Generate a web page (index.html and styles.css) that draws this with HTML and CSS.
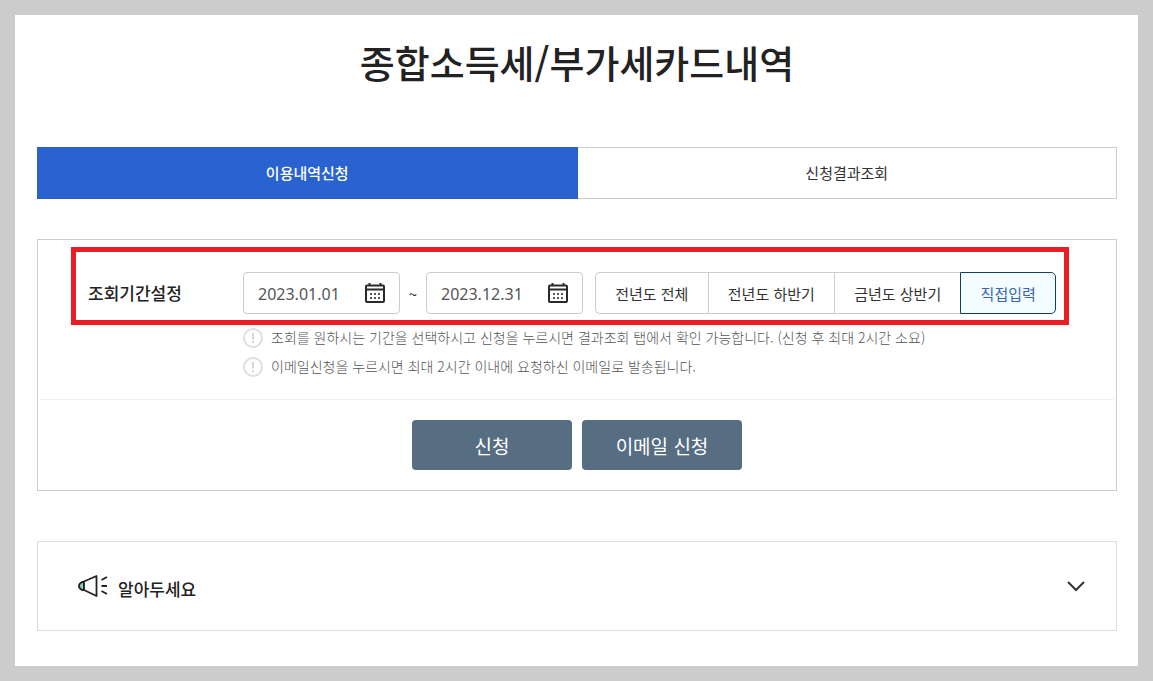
FILE: index.html
```html
<!DOCTYPE html>
<html lang="ko">
<head>
<meta charset="utf-8">
<meta name="viewport" content="width=device-width, initial-scale=1">
<title>종합소득세/부가세카드내역</title>
<link rel="stylesheet" href="styles.css">
</head>
<body>
<svg class="sprite" aria-hidden="true">
  <symbol id="calendar" viewBox="0 0 22 22">
    <path d="M3 3.500h16q1 0 1 1V19q0 1-1 1H3q-1 0-1-1V4.500q0-1 1-1z" fill="none" stroke="#2a2a2a" stroke-width="2"/>
    <path d="M2 7.500h18" stroke="#2a2a2a" stroke-width="2"/>
    <path d="M5.500 1v3M16.500 1v3" stroke="#2a2a2a" stroke-width="2"/>
    <path d="M6 11h2v2H6zm4 0h2v2h-2zm4 0h2v2h-2zM6 15h2v2H6zm4 0h2v2h-2zm4 0h2v2h-2z" fill="#555"/>
  </symbol>
  <symbol id="info" viewBox="0 0 20 20">
    <circle cx="10" cy="10" r="9" fill="none" stroke="#dfdfdf" stroke-width="2"/>
    <path d="M10 5v6.500M10 13v2" stroke="#d6d6d6" stroke-width="2"/>
  </symbol>
</svg>
<main class="page">
  <h1 class="title">종합소득세/부가세카드내역</h1>

  <nav class="tabs">
    <a class="tab tab-active" href="#apply" aria-current="page">이용내역신청</a>
    <a class="tab" href="#result">신청결과조회</a>
  </nav>

  <form class="panel" id="apply">
    <div class="fields">
      <div class="period">
        <label class="period-label" for="from">조회기간설정</label>
        <div class="controls">
          <div class="date">
            <input class="date-input" id="from" type="text" value="2023.01.01">
            <button class="date-button" type="button" aria-label="시작일 선택"><svg class="calendar"><use href="#calendar"/></svg></button>
          </div>
          <span class="tilde">~</span>
          <div class="date">
            <input class="date-input" type="text" value="2023.12.31" aria-label="종료일">
            <button class="date-button" type="button" aria-label="종료일 선택"><svg class="calendar"><use href="#calendar"/></svg></button>
          </div>
          <div class="segments">
            <button class="segment" type="button">전년도 전체</button>
            <button class="segment" type="button">전년도 하반기</button>
            <button class="segment" type="button">금년도 상반기</button>
            <button class="segment segment-active" type="button" aria-pressed="true">직접입력</button>
          </div>
        </div>
      </div>
      <ul class="notes">
        <li class="note"><svg class="info" aria-hidden="true"><use href="#info"/></svg><span class="note-text">조회를 원하시는 기간을 선택하시고 신청을 누르시면 결과조회 탭에서 확인 가능합니다. (신청 후 최대 2시간 소요)</span></li>
        <li class="note"><svg class="info" aria-hidden="true"><use href="#info"/></svg><span class="note-text">이메일신청을 누르시면 최대 2시간 이내에 요청하신 이메일로 발송됩니다.</span></li>
      </ul>
    </div>
    <div class="actions">
      <button class="action" type="submit">신청</button>
      <button class="action" type="button">이메일 신청</button>
    </div>
  </form>

  <button class="guide" type="button" aria-expanded="false">
    <svg class="megaphone" viewBox="0 0 30 24" aria-hidden="true">
      <path d="M6 8H4q-3 1.500-3 4t3 4h2z" fill="#7fd6b0" stroke="#222" stroke-width="1.800"/>
      <path d="M6 7.500 18.500 2v20L6 16z" fill="#fff" stroke="#222" stroke-width="1.800" stroke-linejoin="round"/>
      <path d="M23.500 6 29 3M23.500 12H29M23.500 17l5.500 3" fill="none" stroke="#222" stroke-width="1.800"/>
    </svg>
    <span class="guide-title">알아두세요</span>
    <svg class="chevron" viewBox="0 0 20 12" aria-hidden="true"><path d="m2 2 8 8 8-8" fill="none" stroke="#333" stroke-width="2"/></svg>
  </button>
</main>
</body>
</html>
```
FILE: styles.css
```css
* {
  box-sizing: border-box;
}

body {
  margin: 0;
  padding: 15px;
  background: #ccc;
  color: #222;
  font-family: "Noto Sans CJK KR", sans-serif;
  font-size: 15px;
}

button,
input {
  margin: 0;
  font: inherit;
  color: inherit;
}

.sprite {
  display: none;
}

.page {
  padding: 20px 21px 35px 22px;
  background: #fff;
}

.title {
  margin: 0 0 58px;
  font-size: 38px;
  font-weight: 500;
  line-height: 54px;
  text-align: center;
}

.tabs {
  display: flex;
  height: 52px;
}

.tab {
  flex: 1;
  display: flex;
  align-items: center;
  justify-content: center;
  padding-bottom: 2px;
  border: 1px solid #ccc;
  border-left: 0;
  color: #333;
  text-decoration: none;
}

.tab-active {
  border: 1px solid #2c62b8;
  background: #2a63d0;
  color: #fff;
  font-weight: 500;
}

.panel {
  margin-top: 40px;
  border: 1px solid #ccc;
}

.fields {
  margin: 0 2px;
  padding: 32px 58px 22px 48px;
  border-bottom: 1px solid #f0f0f0;
}

.period {
  position: relative;
  display: flex;
  align-items: center;
}

.period::after {
  content: "";
  position: absolute;
  inset: -25px -13px -11px -17px;
  border: 5px solid #ec1c24;
  pointer-events: none;
}

.period-label {
  width: 155px;
  flex: none;
  padding-bottom: 2px;
  font-size: 17px;
  font-weight: 500;
}

.controls {
  flex: 1;
  display: flex;
  align-items: center;
}

.date {
  display: flex;
  align-items: center;
  width: 157px;
  height: 42px;
  padding: 0 13px 0 14px;
  border: 1px solid #ccc;
  border-radius: 4px;
}

.date-input {
  flex: 1;
  min-width: 0;
  padding: 2px 0 0;
  border: 0;
  outline: 0;
  background: none;
  color: #555;
  font-family: "Noto Sans", sans-serif;
  font-size: 16px;
}

.date-button {
  display: flex;
  padding: 0;
  border: 0;
  background: none;
}

.calendar {
  width: 22px;
  height: 22px;
}

.tilde {
  width: 26px;
  text-align: center;
}

.segments {
  display: flex;
  height: 42px;
  margin-left: 12px;
  flex: 1;
}

.segment {
  flex: auto;
  padding: 0;
  border: 1px solid #ccc;
  border-right: 0;
  background: #fff;
  color: #333;
  white-space: nowrap;
}

.segment:first-child {
  border-radius: 5px 0 0 5px;
}

.segment-active {
  border: 1px solid #123f60;
  border-radius: 0 5px 5px 0;
  background: #f3fdff;
  color: #3a66b0;
}

.notes {
  display: grid;
  gap: 9px;
  margin: 14px 0 0 155px;
  padding: 0;
  list-style: none;
}

.note {
  display: flex;
  align-items: center;
  gap: 8px;
  color: #555;
  font-size: 14px;
  font-weight: 300;
  line-height: 18px;
}

.note-text {
  padding-bottom: 2px;
}

.info {
  flex: none;
  width: 20px;
  height: 20px;
}

.actions {
  display: flex;
  justify-content: center;
  gap: 10px;
  padding: 20px 0;
}

.action {
  width: 160px;
  height: 50px;
  padding: 0;
  border: 0;
  border-radius: 4px;
  background: #566d82;
  color: #fff;
  font-size: 19px;
}

.guide {
  display: flex;
  align-items: center;
  width: 100%;
  height: 90px;
  margin-top: 50px;
  padding: 0 30px 0 40px;
  border: 1px solid #ddd;
  background: #fff;
  text-align: left;
}

.megaphone {
  width: 30px;
  height: 24px;
}

.guide-title {
  flex: 1;
  margin-left: 10px;
  padding-top: 4px;
  font-size: 17px;
  font-weight: 500;
}

.chevron {
  width: 20px;
  height: 12px;
}
```
